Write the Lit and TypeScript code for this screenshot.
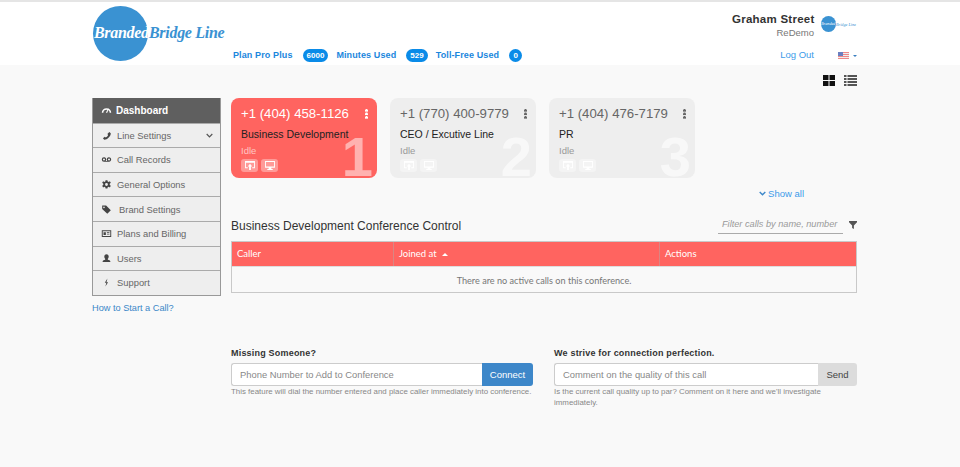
import { LitElement, html, css, svg } from 'lit';
import { customElement } from 'lit/decorators.js';

const icons: Record<string, unknown> = {
  gauge: svg`<path d="M1 10a6 6 0 0 1 12 0h-2a4 4 0 0 0-8 0z"/><path d="M6.2 10 9 4.6l.8.4L8 10z"/>`,
  phone: svg`<path d="M10.6 2.4 12.4 4c.4 3.6-4.6 8.4-8.3 8.3L2.5 10.5l2.3-2 1.3 1.1c1.3-.6 2.5-1.8 3-3.1L8.1 5z"/>`,
  voicemail: svg`<path fill-rule="evenodd" d="M3.8 4.2A2.8 2.8 0 0 1 6 8.8h2a2.8 2.8 0 1 1 2.2 1H3.8a2.8 2.8 0 0 1 0-5.6zm0 1.5a1.3 1.3 0 1 0 0 2.6 1.3 1.3 0 0 0 0-2.6zm6.4 0a1.3 1.3 0 1 0 0 2.6 1.3 1.3 0 0 0 0-2.6z"/>`,
  cog: svg`<path fill-rule="evenodd" d="M5.8 1.5h2.4l.3 1.7 1.3.6 1.5-.9 1.2 2-1.4 1.1v1.6l1.4 1.1-1.2 2-1.5-.9-1.3.6-.3 1.7H5.8l-.3-1.7-1.3-.6-1.5.9-1.2-2L2.9 7.600V6L1.5 4.900l1.2-2 1.5.9 1.3-.6zM7 5.200a1.800 1.800 0 1 0 0 3.600 1.800 1.800 0 0 0 0-3.600z"/>`,
  tag: svg`<path fill-rule="evenodd" d="M1.5 2h5l6 6-4.5 4.500-6.500-6zM3.800 3.300a1 1 0 1 0 0 2 1 1 0 0 0 0-2z"/>`,
  billing: svg`<path fill-rule="evenodd" d="M1 3h12v8.500H1zm1.200 1.200v6h9.600v-6z"/><path d="M3.200 5.400h3v3.600h-3zM7.500 5.400h3.200v1H7.500zM7.500 7.200h3.200v1H7.500z"/>`,
  user: svg`<path d="M7 1.500c1.800 0 2.800 1.300 2.800 3 0 1.300-.6 2.400-1.300 3 .1.700.5 1 1.300 1.300 1.200.4 2.200.8 2.200 2.700H2c0-1.900 1-2.300 2.200-2.700.8-.3 1.200-.6 1.300-1.300-.7-.6-1.300-1.700-1.300-3 0-1.700 1-3 2.800-3z"/>`,
  bolt: svg`<path d="M8.200 2 4.800 7.300h2l-1.200 4.900 3.400-5.600H7z"/>`,
};

const menu = [
  { label: 'Dashboard', icon: 'gauge', active: true },
  { label: 'Line Settings', icon: 'phone', more: true },
  { label: 'Call Records', icon: 'voicemail' },
  { label: 'General Options', icon: 'cog' },
  { label: 'Brand Settings', icon: 'tag', wide: true },
  { label: 'Plans and Billing', icon: 'billing' },
  { label: 'Users', icon: 'user' },
  { label: 'Support', icon: 'bolt' },
];

const lines = [
  { phone: '+1 (404) 458-1126', name: 'Business Development', no: 1, on: true },
  { phone: '+1 (770) 400-9779', name: 'CEO / Excutive Line', no: 2 },
  { phone: '+1 (404) 476-7179', name: 'PR', no: 3 },
];

@customElement('app-root')
export class AppRoot extends LitElement {
  static styles = css`
    :host {
      display: block;
      height: 467px;
      overflow: hidden;
      background: #f9f9f9;
      font-family: "Liberation Sans", Arial, sans-serif;
      color: #333;
    }
    * { box-sizing: border-box; }

    /* Header */
    .top {
      height: 65px;
      background: #fff;
      border-top: 2px solid #e5e5e5;
      padding: 0 103px 0 93px;
      display: flex;
    }
    .logo {
      width: 140px;
      height: 56px;
      margin-top: 3px;
      display: flex;
      align-items: center;
      white-space: nowrap;
      font: italic bold 16px "Liberation Serif", serif;
      letter-spacing: -0.3px;
      color: #3a92d2;
    }
    .logo-disc {
      width: 55px;
      height: 55px;
      border-radius: 50%;
      background: #3a92d2;
      color: #fff;
      display: flex;
      align-items: center;
      flex: none;
      padding-left: 1px;
    }
    .logo-rest { padding-left: 1px; }
    .stats {
      align-self: flex-end;
      display: flex;
      align-items: center;
      height: 20px;
      font-size: 9px;
      font-weight: 700;
      letter-spacing: 0.12px;
      color: #1a86dd;
      white-space: nowrap;
    }
    .stats b {
      background: #0a8be8;
      color: #fff;
      border-radius: 7px;
      height: 13px;
      line-height: 13px;
      padding: 0 4px;
      margin: 0 8px 0 10px;
      font-size: 8px;
      letter-spacing: 0;
      min-width: 13px;
      text-align: center;
    }
    .user {
      margin-left: auto;
      width: 125px;
      display: grid;
      grid-template-columns: 82px 43px;
      grid-template-rows: 43px 20px;
    }
    .who { text-align: right; padding-top: 10px; white-space: nowrap; }
    .who strong {
      display: block;
      font-size: 11.5px;
      letter-spacing: 0.25px;
      line-height: 14px;
      color: #333;
    }
    .who span { display: block; font-size: 9.5px; color: #777; line-height: 14px; }
    .mini {
      margin: 14px 0 0 7px;
      display: flex;
      align-items: center;
      height: 16px;
      font: italic 4.2px "Liberation Serif", serif;
      color: #3a92d2;
      white-space: nowrap;
    }
    .mini i {
      width: 15px;
      height: 16px;
      border-radius: 50%;
      background: #3a92d2;
      flex: none;
      color: #fff;
      line-height: 16px;
      overflow: hidden;
    }
    .logout { text-align: right; font-size: 9.5px; color: #3d9be9; line-height: 20px; }
    .lang { display: flex; align-items: center; gap: 4px; padding-left: 24px; padding-top: 1px; }
    .lang svg { display: block; flex: none; }
    .caret { width: 0; height: 0; border: 2.5px solid transparent; border-top-color: #3a7fc0; border-bottom: 0; flex: none; }

    /* View toggles */
    .views {
      display: flex;
      justify-content: flex-end;
      gap: 9px;
      height: 33px;
      padding: 10px 103px 0 0;
    }

    /* Page columns */
    .page { display: flex; padding-left: 92px; gap: 10px; align-items: flex-start; }
    .side { width: 129px; flex: none; }
    .menu { border: 1px solid #999; border-top: 0; background: #eee; }
    .item {
      height: 24.6px;
      display: flex;
      align-items: center;
      font-size: 9.4px;
      color: #666;
      border-top: 1px solid #aaa;
      padding-left: 8px;
    }
    .item svg.ic { width: 11px; height: 11px; fill: #444; flex: none; margin-right: 5px; }
    .item.wide svg.ic { margin-right: 7px; }
    .item.active { background: #5f5f5f; color: #fff; font-size: 10px; font-weight: 700; border-top-color: #5f5f5f; }
    .item.active svg.ic { fill: #fff; margin-right: 4px; }
    .item .more { margin-left: auto; margin-right: 7px; width: 7px; height: 5px; }
    .howto { display: block; margin-top: 6px; font-size: 9.2px; color: #3a87c8; line-height: 12px; }

    .main { width: 626px; flex: none; }
    .cards { display: flex; gap: 13px; }
    .card {
      width: 146px;
      height: 80px;
      border-radius: 8px;
      background: #eeeeee;
      position: relative;
      padding: 8px 0 0 10px;
    }
    .card.on { background: #ff6460; }
    .num { font-size: 13.2px; line-height: 16px; color: #666; }
    .card.on .num { color: #fff; }
    .dots {
      position: absolute;
      top: 11px;
      right: 9px;
      width: 3px;
      height: 10px;
      background: radial-gradient(circle at 50% 1.5px, #666 1.4px, transparent 1.5px) 0 0 / 3px 3.5px repeat-y;
    }
    .card.on .dots {
      background: radial-gradient(circle at 50% 1.5px, #fff 1.4px, transparent 1.5px) 0 0 / 3px 3.5px repeat-y;
    }
    .name { font-size: 10.5px; line-height: 13px; color: #222; margin-top: 5.5px; white-space: nowrap; }
    .idle { font-size: 9.5px; line-height: 12px; color: #999; margin-top: 4.5px; }
    .card.on .idle { color: #ffc4c2; }
    .tools { display: flex; gap: 3px; margin-top: 2px; }
    .tool {
      width: 17px;
      height: 13px;
      border-radius: 3px;
      background: rgba(255, 255, 255, 0.35);
      display: flex;
      align-items: center;
      justify-content: center;
    }
    .tool svg { width: 10px; height: 9px; fill: #fff; }
    .big {
      position: absolute;
      right: 4px;
      bottom: 0;
      font-size: 56px;
      line-height: 42px;
      font-weight: 700;
      color: rgba(255, 255, 255, 0.5);
    }
    .card:not(.on) .big { color: rgba(255, 255, 255, 0.6); }

    .showall {
      text-align: right;
      padding-right: 53px;
      margin-top: 10px;
      font-size: 9.5px;
      line-height: 12px;
      color: #3d9be9;
      height: 12px;
    }
    .showall svg { width: 7px; height: 5px; margin-right: 2px; vertical-align: 1px; }

    .head {
      display: flex;
      align-items: flex-end;
      margin-top: 16px;
      height: 18px;
    }
    .head h2 {
      margin: 0;
      font-size: 12px;
      font-weight: 400;
      color: #333;
      line-height: 16px;
    }
    .filter {
      margin-left: auto;
      width: 125px;
      height: 17px;
      border-bottom: 1px solid #aaa;
      font-size: 9.2px;
      font-style: italic;
      color: #999;
      line-height: 15px;
      padding-left: 4px;
      white-space: nowrap;
    }
    .funnel { width: 8px; height: 8px; margin: 0 0 5px 6px; fill: #555; flex: none; }

    .table {
      margin-top: 7px;
      height: 52px;
      border: 1px solid #c9c9c9;
      font-family: Lato, sans-serif;
      font-size: 9.5px;
    }
    .thead {
      display: grid;
      grid-template-columns: 161px 266px 1fr;
      height: 24px;
      background: #ff6460;
      color: #fff;
      line-height: 24px;
    }
    .thead div { padding-left: 5px; border-left: 1px solid #d98683; }
    .thead div:first-child { border-left: 0; }
    .sort {
      display: inline-block;
      width: 0;
      height: 0;
      border: 3px solid transparent;
      border-bottom-color: #fff;
      border-top: 0;
      margin-left: 3px;
      vertical-align: 1px;
    }
    .empty { text-align: center; color: #777; font-size: 9.15px; line-height: 27px; border-top: 1px solid #ddd; }

    .forms { display: flex; gap: 21px; margin-top: 54px; align-items: flex-start; }
    .form { width: 302px; }
    .form + .form { width: 303px; }
    .form h3 {
      margin: 0 0 4px;
      font-size: 9px;
      font-weight: 700;
      letter-spacing: 0.2px;
      line-height: 12px;
      color: #333;
    }
    .group { display: flex; height: 23px; }
    .field {
      flex: 1;
      background: #fff;
      border: 1px solid #ccc;
      border-right: 0;
      border-radius: 3px 0 0 3px;
      padding-left: 8px;
      font-size: 9.4px;
      line-height: 21px;
      color: #888;
    }
    .btn {
      width: 51px;
      border-radius: 0 3px 3px 0;
      background: #3d87c9;
      color: #fff;
      font-size: 9.5px;
      line-height: 23px;
      text-align: center;
    }
    .btn.plain { width: 39px; background: #dcdcdc; color: #444; }
    .help { margin: 0; font-size: 7.9px; line-height: 11px; color: #888; }
    .help.one { white-space: nowrap; }
  `;

  private renderCard(l: (typeof lines)[number]) {
    return html`
      <div class="card ${l.on ? 'on' : ''}">
        <div class="num">${l.phone}</div>
        <span class="dots"></span>
        <div class="name">${l.name}</div>
        <div class="idle">Idle</div>
        <div class="tools">
          <span class="tool">
            <svg viewBox="0 0 11 10"><path fill-rule="evenodd" d="M0 0h11v8H8V7h2V2H1v5h2v1H0z"/><path d="M5.5 3 8 6H6.5v4h-2V6H3z"/></svg>
          </span>
          <span class="tool">
            <svg viewBox="0 0 11 10"><path fill-rule="evenodd" d="M0 0h11v7.5H7V9h1.5v1h-6V9H4V7.5H0zm1 1v5h9V1z"/></svg>
          </span>
        </div>
        <span class="big">${l.no}</span>
      </div>
    `;
  }

  render() {
    return html`
      <div class="top">
        <div class="logo">
          <div class="logo-disc"><span>Branded</span></div>
          <span class="logo-rest">Bridge Line</span>
        </div>
        <div class="stats">
          Plan Pro Plus<b>6000</b>Minutes Used<b>529</b>Toll-Free Used<b>0</b>
        </div>
        <div class="user">
          <div class="who"><strong>Graham Street</strong><span>ReDemo</span></div>
          <div class="mini"><i>Branded</i>Bridge Line</div>
          <div class="logout">Log Out</div>
          <div class="lang">
            <svg width="11" height="7" viewBox="0 0 11 7">
              <rect width="11" height="7" fill="#e88"/>
              <rect y="1" width="11" height="1" fill="#eee"/>
              <rect y="3" width="11" height="1" fill="#eee"/>
              <rect y="5" width="11" height="1" fill="#eee"/>
              <rect width="5" height="4" fill="#6a7fc0"/>
            </svg>
            <span class="caret"></span>
          </div>
        </div>
      </div>

      <div class="views">
        <svg width="12" height="11" viewBox="0 0 12 11" fill="#111">
          <path d="M0 0h5.5v5H0zM6.5 0H12v5H6.500zM0 6h5.500v5H0zM6.500 6H12v5H6.500z"/>
        </svg>
        <svg width="13" height="11" viewBox="0 0 13 11" fill="#555">
          <path d="M0 0h2.500v2H0zM3.500 0H13v2H3.500zM0 3h2.500v2H0zM3.500 3H13v2H3.500zM0 6h2.500v2H0zM3.500 6H13v2H3.500zM0 9h2.500v2H0zM3.500 9H13v2H3.500z"/>
        </svg>
      </div>

      <div class="page">
        <div class="side">
          <div class="menu">
            ${menu.map(
              (m) => html`
                <div class="item ${m.active ? 'active' : ''} ${m.wide ? 'wide' : ''}">
                  <svg class="ic" viewBox="0 0 14 14">${icons[m.icon]}</svg>
                  ${m.label}
                  ${m.more
                    ? html`<svg class="more" viewBox="0 0 7 5"><path d="M.7 1 3.5 3.8 6.3 1" fill="none" stroke="#555" stroke-width="1.2"/></svg>`
                    : ''}
                </div>
              `
            )}
          </div>
          <a class="howto">How to Start a Call?</a>
        </div>

        <div class="main">
          <div class="cards">${lines.map((l) => this.renderCard(l))}</div>
          <div class="showall">
            <svg viewBox="0 0 7 5"><path d="M.7 1 3.5 3.8 6.3 1" fill="none" stroke="#3d87c9" stroke-width="1.4"/></svg>Show all
          </div>
          <div class="head">
            <h2>Business Development Conference Control</h2>
            <div class="filter">Filter calls by name, number</div>
            <svg class="funnel" viewBox="0 0 9 9"><path d="M0 0h9v1.5L5.5 5v4l-2-1.2V5L0 1.5z"/></svg>
          </div>
          <div class="table">
            <div class="thead">
              <div>Caller</div>
              <div>Joined at <span class="sort"></span></div>
              <div>Actions</div>
            </div>
            <div class="empty">There are no active calls on this conference.</div>
          </div>
          <div class="forms">
            <div class="form">
              <h3>Missing Someone?</h3>
              <div class="group">
                <div class="field">Phone Number to Add to Conference</div>
                <div class="btn">Connect</div>
              </div>
              <p class="help one">This feature will dial the number entered and place caller immediately into conference.</p>
            </div>
            <div class="form">
              <h3>We strive for connection perfection.</h3>
              <div class="group">
                <div class="field">Comment on the quality of this call</div>
                <div class="btn plain">Send</div>
              </div>
              <p class="help">Is the current call quality up to par? Comment on it here and we'll investigate immediately.</p>
            </div>
          </div>
        </div>
      </div>
    `;
  }
}
